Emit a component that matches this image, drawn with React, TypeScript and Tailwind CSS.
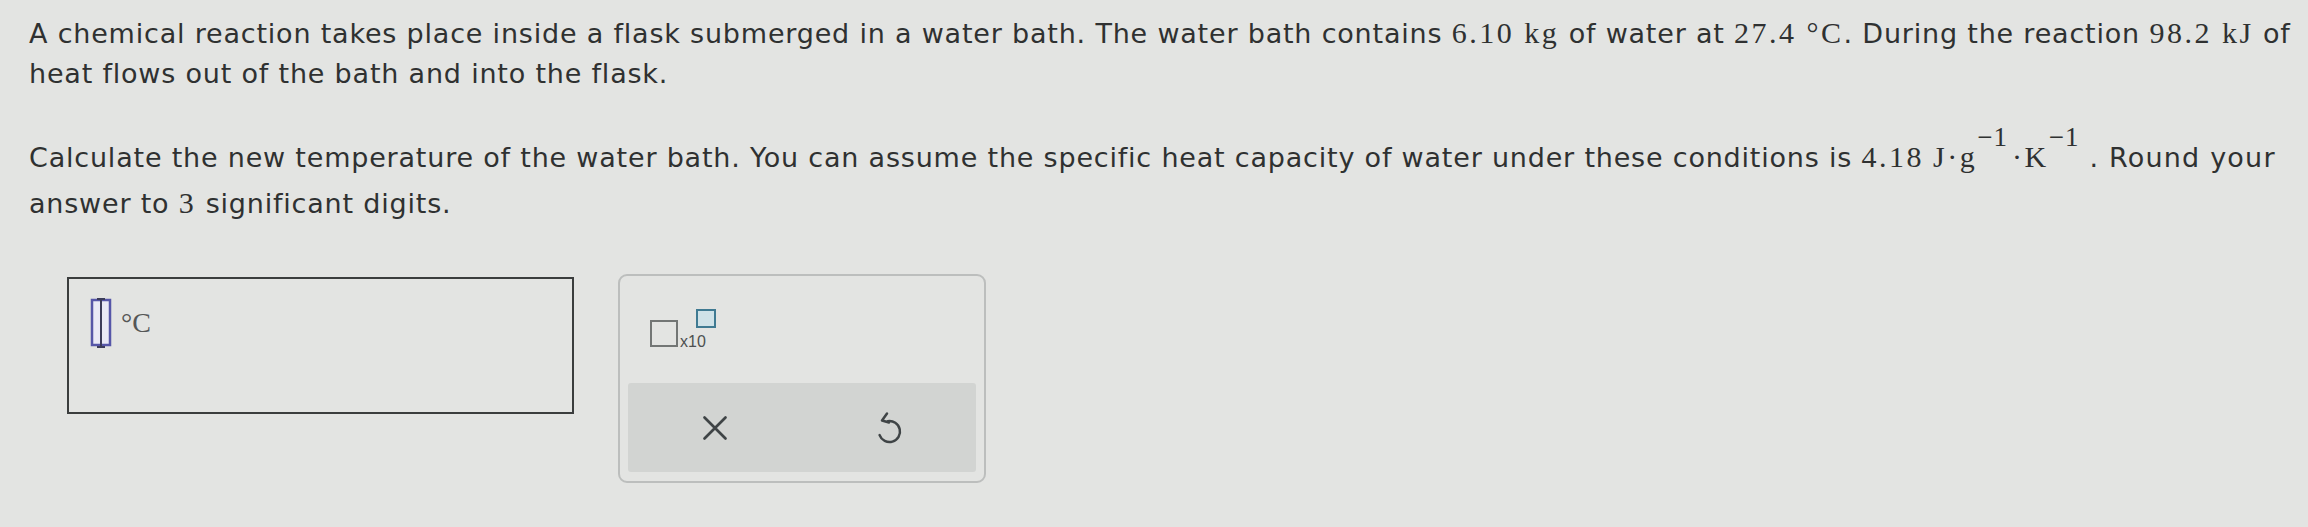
import React from 'react';

// serif run for numbers and units, as the math renderer draws them
const M: React.FC<{ children: React.ReactNode; className?: string }> = ({ children, className = '' }) => (
  <span className={`font-['Liberation_Serif',serif] text-[30px] leading-none tracking-[2.5px] ${className}`}>
    {children}
  </span>
);

const Sup: React.FC<{ children: React.ReactNode }> = ({ children }) => (
  <span className="relative -top-[21px] text-[27px] tracking-[1px]">{children}</span>
);

const CursorSlot = () => (
  <svg width="24" height="52" viewBox="0 0 24 52" className="shrink-0">
    <rect x="3" y="3" width="18" height="45" fill="#e9e9f6" stroke="#5656a8" strokeWidth="2.5" />
    <line x1="12" y1="2" x2="12" y2="50" stroke="#3c3c5a" strokeWidth="2" />
    <line x1="8" y1="2" x2="16" y2="2" stroke="#3c3c5a" strokeWidth="2" />
    <line x1="8" y1="50" x2="16" y2="50" stroke="#3c3c5a" strokeWidth="2" />
  </svg>
);

const CloseIcon = () => (
  <svg width="26" height="26" viewBox="0 0 26 26">
    <path d="M2.5 2.5 L23.5 23.5 M23.5 2.5 L2.5 23.5" stroke="#3f4446" strokeWidth="2.7" strokeLinecap="round" fill="none" />
  </svg>
);

const UndoIcon = () => (
  <svg width="28" height="34" viewBox="0 0 28 34">
    <path d="M12.7 10.2 A10.5 10.5 0 1 1 4.6 24.1" stroke="#3f4446" strokeWidth="2.5" strokeLinecap="round" fill="none" />
    <path d="M12 2.5 L7 9.5 L14 11.5" stroke="#3f4446" strokeWidth="2.5" strokeLinecap="round" strokeLinejoin="round" fill="none" />
  </svg>
);

export default function App() {
  return (
    <div className="w-[2308px] h-[527px] overflow-hidden bg-[#e3e4e2] text-[#2f3131] font-['DejaVu_Sans',Verdana,sans-serif]">
      {/* ================= Question text ================= */}
      <div className="pl-[29px] pt-[14px] text-[27px] leading-[40px] tracking-[0.8px] whitespace-nowrap">
        <div className="h-[40px]">
          A chemical reaction takes place inside a flask submerged in a water bath. The water bath contains{' '}
          <M>6.10 kg</M> of water at <M>27.4 °C</M>. During the reaction <M>98.2 kJ</M> of
        </div>
        <div className="h-[40px]">heat flows out of the bath and into the flask.</div>
        <div className="h-[40px] mt-[44px]">
          Calculate the new temperature of the water bath. You can assume the specific heat capacity of water under
          these conditions is{' '}
          <M>
            4.18<span className="ml-[9px]">J·g</span>
            <Sup>−1</Sup>
            <span className="ml-[4px]">·K</span>
            <Sup>−1</Sup>
          </M>
          <span className="ml-[10px] tracking-[1.2px]">. Round your</span>
        </div>
        <div className="h-[40px] mt-[6px]">
          answer to <M>3</M> significant digits.
        </div>
      </div>

      {/* ================= Answer area ================= */}
      <div className="flex items-start gap-[44px] pl-[67px] mt-[50px]">
        <div className="w-[507px] h-[137px] mt-[3px] border-2 border-[#3b3d3d] flex items-start gap-[8px] pl-[20px] pt-[18px]">
          <CursorSlot />
          <span className="mt-[5px] font-['Liberation_Serif',serif] text-[28px] text-[#555757]">°C</span>
        </div>

        <div className="w-[368px] h-[209px] rounded-[9px] border-2 border-[#bcbebd] flex flex-col px-[8px] pb-[9px]">
          <div className="flex items-end h-[107px] pl-[22px] pb-[36px]">
            <div className="w-[28px] h-[27px] border-2 border-[#737675]" />
            <span className="ml-[2px] mb-[-3px] font-['Liberation_Sans',Arial,sans-serif] text-[16px] leading-none text-[#4d5050]">
              x10
            </span>
            <div className="self-start mt-[33px] -ml-[10px] w-[20px] h-[19px] border-2 border-[#3f7a92] bg-[#cfe2e8]" />
          </div>
          <div className="flex-1 grid grid-cols-2 bg-[#d2d4d2] rounded-[3px]">
            <div className="flex items-center justify-center">
              <CloseIcon />
            </div>
            <div className="flex items-center justify-center">
              <UndoIcon />
            </div>
          </div>
        </div>
      </div>
    </div>
  );
}
